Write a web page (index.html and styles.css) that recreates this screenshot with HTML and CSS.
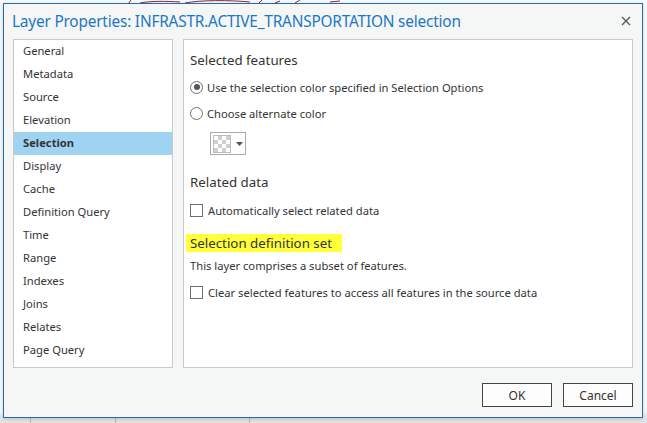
FILE: index.html
```html
<!DOCTYPE html>
<html>
<head>
<meta charset="utf-8">
<link rel="stylesheet" href="styles.css">
</head>
<body>
<div class="backdrop">
  <svg class="mapline" width="400" height="4" viewBox="0 0 400 4"><path d="M128 4L131 0M140 3C150 1 165 1 180 2M185 3C200 0 230 0 250 2M258 4L262 0M275 3L280 1M295 3L300 0M330 2L340 1" stroke="#8a2a3a" stroke-width="1" fill="none"/></svg>
  <div class="bg-line bg-v1"></div>
  <div class="bg-line bg-v2"></div>
  <div class="bg-line bg-v3"></div>
  <div class="dialog">
    <div class="titlebar">
      <span class="title">Layer Properties: INFRASTR.ACTIVE_TRANSPORTATION selection</span>
      <svg class="close" width="10" height="10" viewBox="0 0 10 10"><path d="M1 1L9 9M9 1L1 9" stroke="#555" stroke-width="1.3"/></svg>
    </div>
    <div class="main">
      <ul class="nav">
        <li>General</li>
        <li>Metadata</li>
        <li>Source</li>
        <li>Elevation</li>
        <li class="active">Selection</li>
        <li>Display</li>
        <li>Cache</li>
        <li>Definition Query</li>
        <li>Time</li>
        <li>Range</li>
        <li>Indexes</li>
        <li>Joins</li>
        <li>Relates</li>
        <li>Page Query</li>
      </ul>
      <div class="content">
        <h2 class="heading h-first">Selected features</h2>
        <div class="option opt-1"><span class="radio checked"></span><span>Use the selection color specified in Selection Options</span></div>
        <div class="option"><span class="radio"></span><span>Choose alternate color</span></div>
        <div class="colorbtn">
          <span class="swatch"></span>
          <svg class="caret" width="7" height="4" viewBox="0 0 7 4"><path d="M0 0H7L3.5 4Z" fill="#555"/></svg>
        </div>
        <h2 class="heading h-related">Related data</h2>
        <div class="option opt-related"><span class="check"></span><span>Automatically select related data</span></div>
        <h2 class="heading h-def"><span class="hl">Selection definition set</span></h2>
        <p class="desc">This layer comprises a subset of features.</p>
        <div class="option opt-clear"><span class="check"></span><span>Clear selected features to access all features in the source data</span></div>
      </div>
    </div>
    <div class="footer">
      <button class="btn">OK</button>
      <button class="btn">Cancel</button>
    </div>
  </div>
</div>
</body>
</html>
```
FILE: styles.css
```css
* { box-sizing: border-box; }
html, body { margin: 0; padding: 0; }
body {
  width: 647px;
  height: 423px;
  overflow: hidden;
  background: #e9e9e9;
  font-family: "Noto Sans", "Open Sans", sans-serif;
  color: #333;
}
.backdrop {
  position: relative;
  width: 647px;
  height: 423px;
  padding: 3px 4px 5px 3px;
  background: linear-gradient(#fafafa, #fafafa 412px, #e4e4e4 418px);
}
.mapline { position: absolute; left: 0; top: 0; }
.bg-line { position: absolute; background: #b9b9b9; width: 1px; top: 410px; height: 13px; }
.bg-v1 { left: 30px; }
.bg-v2 { left: 115px; }
.bg-v3 { left: 249px; }
.dialog {
  position: relative;
  width: 640px;
  height: 415px;
  border: 1px solid #1f6fb2;
  background: #f5f7f6;
  display: flex;
  flex-direction: column;
  box-shadow: 0 1px 4px rgba(0,0,0,0.18);
}
.titlebar {
  height: 35px;
  display: flex;
  align-items: center;
  justify-content: space-between;
  padding: 0 11px 1px 8px;
}
.title {
  color: #1b76c4;
  font-size: 15.4px;
  letter-spacing: -0.2px;
}
.close { display: block; }
.main {
  display: flex;
  gap: 10px;
  padding: 0 9px 0 9px;
  height: 329px;
}
.nav {
  list-style: none;
  margin: 0;
  padding: 0;
  width: 160px;
  background: #fff;
  border: 1px solid #c9c9c9;
}
.nav li {
  height: 23px;
  line-height: 22px;
  padding-left: 9px;
  font-size: 11.2px;
  color: #333;
}
.nav li.active {
  background: #a0d3f1;
  font-weight: bold;
  color: #333;
}
.content {
  flex: 1;
  background: #fff;
  border: 1px solid #c9c9c9;
  padding: 0 6px;
}
.heading {
  margin: 0;
  font-weight: normal;
  font-size: 13.3px;
  color: #333;
  line-height: 20px;
}
.h-first { margin-top: 10px; }
.h-related { margin-top: 17px; }
.h-def { margin-top: 10px; margin-left: -4px; }
.hl {
  display: inline-block;
  background: #ffff3a;
  padding: 0 10px 0 4px;
  line-height: 18px;
}
.option {
  display: flex;
  align-items: center;
  height: 26px;
  font-size: 11.2px;
  color: #333;
}
.opt-1 { margin-top: 4px; }
.opt-related { margin-top: 5px; }
.opt-clear { margin-top: 3px; }
.radio {
  width: 13px;
  height: 13px;
  border: 1px solid #707070;
  border-radius: 50%;
  margin-right: 4px;
  position: relative;
  flex: none;
}
.radio.checked::after {
  content: "";
  position: absolute;
  left: 2.5px;
  top: 2.5px;
  width: 6px;
  height: 6px;
  border-radius: 50%;
  background: #555;
}
.check {
  width: 13px;
  height: 13px;
  border: 1px solid #6e6e6e;
  margin-right: 5px;
  flex: none;
}
.colorbtn {
  margin: 6px 0 0 20px;
  width: 36px;
  height: 23px;
  border: 1px solid #aaa;
  display: flex;
  align-items: center;
  padding-left: 2px;
  gap: 5px;
}
.swatch {
  width: 18px;
  height: 18px;
  border: 1px solid #bbb;
  background-color: #fff;
  background-image:
    linear-gradient(45deg, #d0d0d0 25%, transparent 25%, transparent 75%, #d0d0d0 75%),
    linear-gradient(45deg, #d0d0d0 25%, transparent 25%, transparent 75%, #d0d0d0 75%);
  background-size: 8px 8px;
  background-position: 0 0, 4px 4px;
}
.desc {
  margin: 3px 0 0;
  font-size: 11.2px;
  line-height: 20px;
  color: #333;
}
.footer {
  flex: 1;
  display: flex;
  justify-content: flex-end;
  align-items: flex-start;
  gap: 11px;
  padding: 15px 9px 0 0;
}
.btn {
  width: 70px;
  height: 24px;
  border: 1px solid #444;
  background: #fdfdfd;
  font-family: inherit;
  font-size: 12px;
  color: #333;
  padding: 0;
}
```
